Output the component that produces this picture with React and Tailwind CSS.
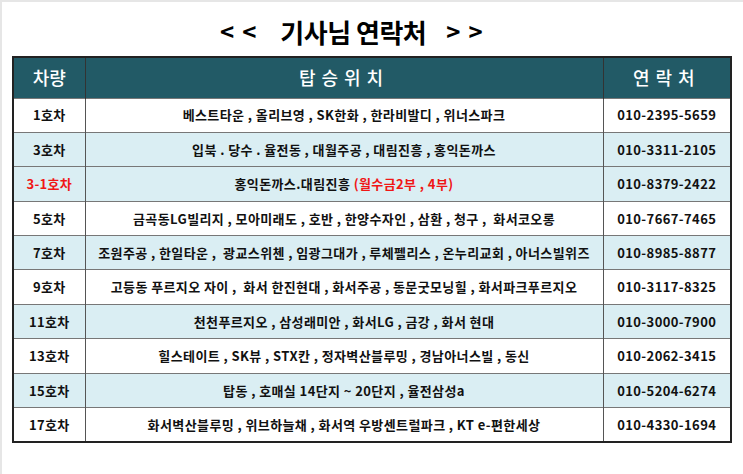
const rows = [
  { car: '1호차', place: '베스트타운 , 올리브영 , SK한화 , 한라비발디 , 위너스파크', phone: '010-2395-5659', blue: false },
  { car: '3호차', place: '입북 . 당수 . 율전동 , 대월주공 , 대림진흥 , 홍익돈까스', phone: '010-3311-2105', blue: true },
  { car: '3-1호차', place: '홍익돈까스.대림진흥', extra: '(월수금2부 , 4부)', phone: '010-8379-2422', blue: true, red: true },
  { car: '5호차', place: '금곡동LG빌리지 , 모아미래도 , 호반 , 한양수자인 , 삼환 , 청구 ,  화서코오롱', phone: '010-7667-7465', blue: false },
  { car: '7호차', place: '조원주공 , 한일타운 ,  광교스위첸 , 임광그대가 , 루체펠리스 , 온누리교회 , 아너스빌위즈', phone: '010-8985-8877', blue: true },
  { car: '9호차', place: '고등동 푸르지오 자이 ,  화서 한진현대 , 화서주공 , 동문굿모닝힐 , 화서파크푸르지오', phone: '010-3117-8325', blue: false },
  { car: '11호차', place: '천천푸르지오 , 삼성래미안 , 화서LG , 금강 , 화서 현대', phone: '010-3000-7900', blue: true },
  { car: '13호차', place: '힐스테이트 , SK뷰 , STX칸 , 정자벽산블루밍 , 경남아너스빌 , 동신', phone: '010-2062-3415', blue: false },
  { car: '15호차', place: '탑동 , 호매실 14단지 ~ 20단지 , 율전삼성a', phone: '010-5204-6274', blue: true },
  { car: '17호차', place: '화서벽산블루밍 , 위브하늘채 , 화서역 우방센트럴파크 , KT e-편한세상', phone: '010-4330-1694', blue: false },
]

export default function App() {
  return (
    <div
      className="w-[743px] h-[474px] bg-white border-l-2 border-t-2 border-[#e6e6e6] text-[#111]"
      style={{ fontFamily: '"Noto Sans CJK KR", "Noto Sans", sans-serif' }}
    >
      <div className="h-[54px] flex items-center pl-[218px] pt-[4px] font-bold text-black">
        <span className="text-[24px] tracking-[8px]">{'<<'}</span>
        <span className="ml-[16px] text-[26px] tracking-[-0.5px]">기사님 연락처</span>
        <span className="ml-[20px] text-[24px] tracking-[8px]">{'>>'}</span>
      </div>
      <div className="pl-[10px]">
        <table className="w-[720px] border-collapse border-2 border-[#222] table-fixed">
          <thead>
            <tr className="h-[41px] bg-[#225a66] text-white text-[18px]">
              <th className="w-[72px] border-r border-[#333] font-medium">차량</th>
              <th className="border-r border-[#333] font-medium tracking-[6px]">탑승위치</th>
              <th className="w-[128px] font-medium tracking-[6px]">연락처</th>
            </tr>
          </thead>
          <tbody>
            {rows.map((r) => (
              <tr key={r.car} className={`h-[34.4px] text-[13px] font-bold border-t border-[#777] ${r.blue ? 'bg-[#daeef3]' : 'bg-white'}`}>
                <td className={`text-center border-r border-[#555] tracking-[0.3px] ${r.red ? 'text-[#f01616]' : ''}`}>{r.car}</td>
                <td className="text-center border-r border-[#555] whitespace-pre tracking-[0.4px]">
                  {r.place}
                  {r.extra && <span className="text-[#f01616]"> {r.extra}</span>}
                </td>
                <td className="text-center tracking-[0.4px]">{r.phone}</td>
              </tr>
            ))}
          </tbody>
        </table>
      </div>
    </div>
  )
}
